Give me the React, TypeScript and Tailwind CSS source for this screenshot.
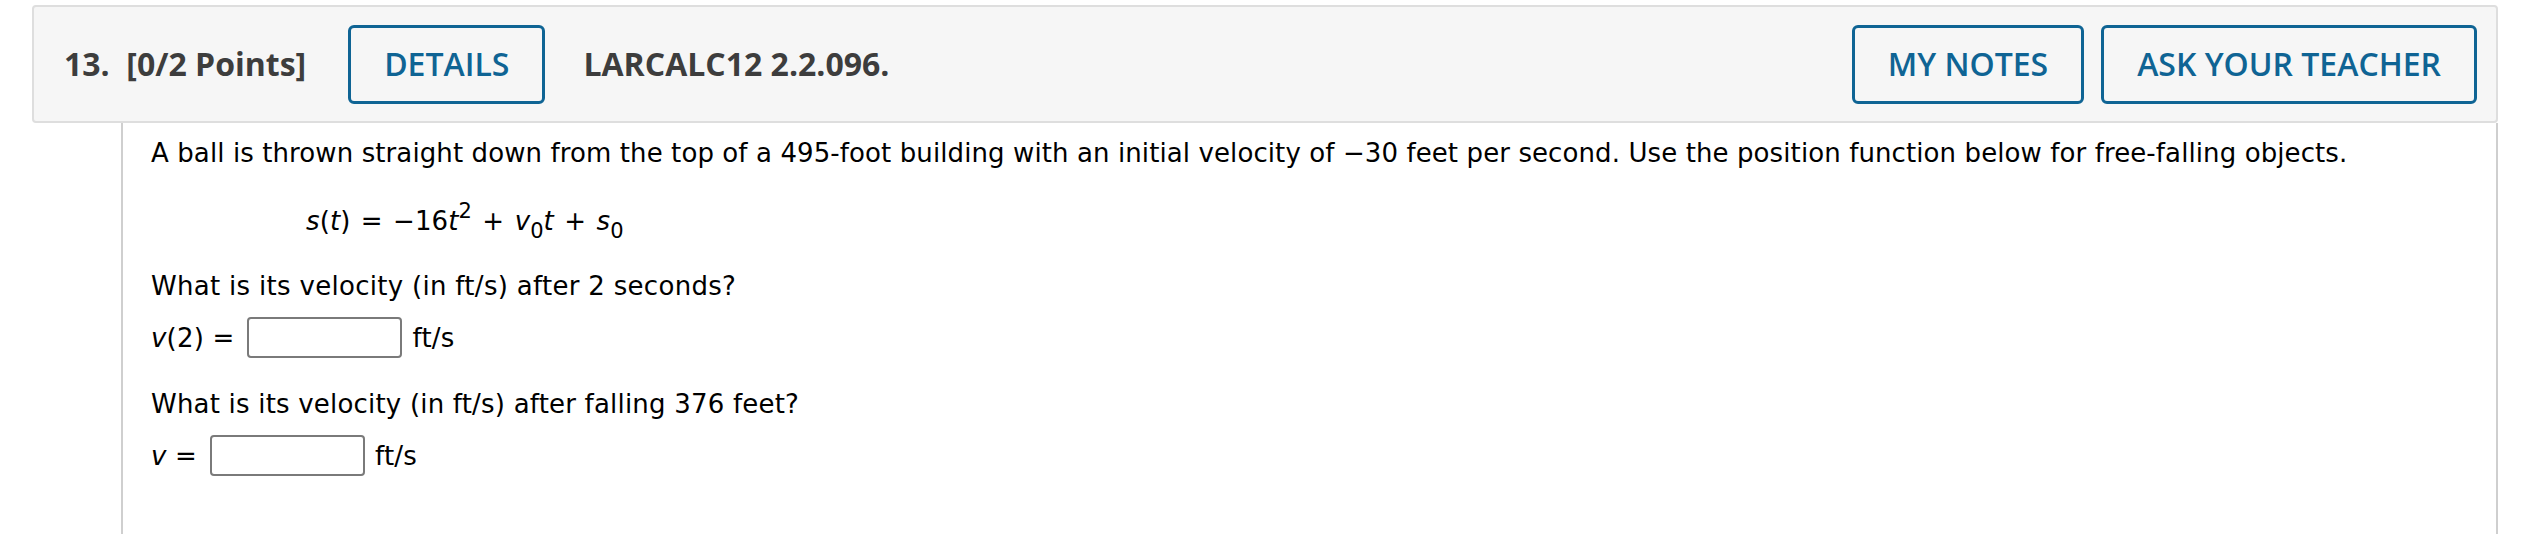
import React from 'react';

const body = { fontFamily: '"DejaVu Sans", Verdana, sans-serif' };
const head = { fontFamily: '"Open Sans", "Liberation Sans", sans-serif' };

function HeadButton({ label }: { label: string }) {
  return (
    <button
      className="h-[79px] px-[33px] rounded-[6px] border-[3px] border-[#0f6494] text-[#0f6494] text-[32px] font-semibold bg-transparent"
      style={head}
    >
      {label}
    </button>
  );
}

function AnswerBox() {
  return <input type="text" className="w-[155px] h-[41px] border-2 border-[#7a7a7a] rounded-[4px] bg-white" />;
}

export default function App() {
  return (
    <div className="bg-white w-[2529px] h-[534px] overflow-hidden pt-[5px]">
      {/* question header */}
      <div className="ml-[32px] w-[2466px] h-[118px] border-2 border-[#dedede] rounded-[4px] bg-[#f6f6f6] flex items-center pl-[30px] pr-[19px]">
        <span className="text-[32px] font-bold text-[#3d3d3d] whitespace-pre" style={head}>
          13.{'  '}[0/2 Points]
        </span>
        <div className="ml-[42px]">
          <HeadButton label="DETAILS" />
        </div>
        <span className="ml-[38px] text-[32px] font-bold text-[#3d3d3d]" style={head}>
          LARCALC12 2.2.096.
        </span>
        <div className="ml-auto flex gap-[17px]">
          <HeadButton label="MY NOTES" />
          <HeadButton label="ASK YOUR TEACHER" />
        </div>
      </div>

      {/* question body */}
      <div
        className="ml-[121px] w-[2377px] border-l-2 border-r-2 border-[#cfcfcf] pl-[28px] pt-[12px] pb-[80px] text-[26px] leading-[36px] tracking-[0.2px] text-black"
        style={body}
      >
        <p className="tracking-[0.1px]">
          A ball is thrown straight down from the top of a 495-foot building with an initial velocity of −30 feet per
          second. Use the position function below for free-falling objects.
        </p>
        <p className="mt-[32px] ml-[155px] whitespace-pre tracking-[0.1px] [word-spacing:2px]">
          <i>s</i>(<i>t</i>) = −16<i>t</i>
          <span className="relative -top-[12px] text-[21px] leading-none">2</span> + <i>v</i>
          <span className="relative top-[8px] text-[21px] leading-none">0</span>
          <i>t</i> + <i>s</i>
          <span className="relative top-[8px] text-[21px] leading-none">0</span>
        </p>
        <p className="mt-[29px] tracking-[0.3px]">What is its velocity (in ft/s) after 2 seconds?</p>
        <div className="mt-[13px] flex items-center h-[41px]">
          <span>
            <i>v</i>(2) =
          </span>
          <div className="ml-[13px] flex">
            <AnswerBox />
          </div>
          <span className="ml-[10px]">ft/s</span>
        </div>
        <p className="mt-[28px]">What is its velocity (in ft/s) after falling 376 feet?</p>
        <div className="mt-[13px] flex items-center h-[41px]">
          <span>
            <i>v</i> =
          </span>
          <div className="ml-[13px] flex">
            <AnswerBox />
          </div>
          <span className="ml-[10px]">ft/s</span>
        </div>
      </div>
    </div>
  );
}
